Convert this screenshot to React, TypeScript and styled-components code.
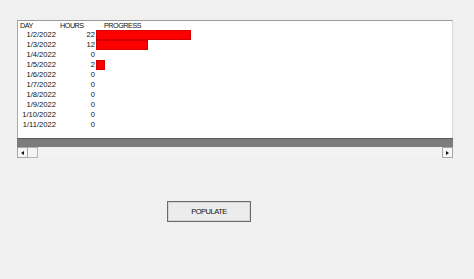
import React from "react";
import styled, { createGlobalStyle } from "styled-components";

const Global = createGlobalStyle`
  html, body { margin: 0; padding: 0; background: #f0f0f0; }
  body { font-family: "Liberation Sans", Arial, sans-serif; color: #111; }
`;

const Page = styled.div`
  width: 474px;
  height: 279px;
  box-sizing: border-box;
  padding: 20px 0 0 17px;
  display: flex;
  flex-direction: column;
`;

const ListBox = styled.div`
  width: 436px;
  display: flex;
  flex-direction: column;
`;

const Body = styled.div`
  height: 117px;
  background: #ffffff;
  border-top: 1px solid #9a9a9a;
  border-left: 1px solid #a8a8a8;
  border-right: 1px solid #d8d8d8;
  display: flex;
  flex-direction: column;
`;

const Row = styled.div<{ $h: number }>`
  display: grid;
  grid-template-columns: 38px 39px 1fr;
  height: ${(p) => p.$h}px;
  align-items: center;
  font-size: 7.6px;
  line-height: ${(p) => p.$h}px;
`;

const Head = styled.div<{ $pad: number }>`
  padding-left: ${(p) => p.$pad}px;
  font-size: 7.2px;
  letter-spacing: -0.45px;
  color: #111;
  white-space: nowrap;
`;

const Num = styled.div`
  text-align: right;
  color: #111;
  white-space: nowrap;
`;

const BarCell = styled.div`
  height: 100%;
  display: flex;
  align-items: stretch;
  padding-left: 1px;
`;

const Bar = styled.div`
  background: #ff0000;
  box-shadow: inset 0 0 0 1px #d40000;
`;

const DarkStrip = styled.div`
  height: 9px;
  background: #7c7c7c;
  border-top: 1px solid #5a5a5a;
  box-sizing: border-box;
`;

const ScrollBar = styled.div`
  height: 11px;
  display: flex;
  background: #f2f2f2;
`;

const ScrollBtn = styled.div`
  width: 11px;
  box-sizing: border-box;
  border: 1px solid #a6a6a6;
  background: #f6f6f6;
  display: flex;
  align-items: center;
  justify-content: center;
`;

const Thumb = styled.div`
  width: 10px;
  box-sizing: border-box;
  border: 1px solid #b4b4b4;
  border-left: none;
  background: #f4f4f4;
`;

const Track = styled.div`
  flex: 1;
`;

const Arrow = styled.div<{ $dir: "left" | "right" }>`
  width: 0;
  height: 0;
  border-top: 2.5px solid transparent;
  border-bottom: 2.5px solid transparent;
  ${(p) =>
    p.$dir === "left"
      ? "border-right: 3px solid #111;"
      : "border-left: 3px solid #111;"}
`;

const Button = styled.button`
  margin: 43px 0 0 150px;
  width: 84px;
  height: 21px;
  box-sizing: border-box;
  border: 1px solid #6a6a6a;
  box-shadow: inset 0 0 0 1px #d4d4d4;
  background: #ececec;
  font-family: "Liberation Sans", Arial, sans-serif;
  font-size: 7.5px;
  letter-spacing: -0.5px;
  color: #111;
  padding: 0;
  cursor: default;
`;

const data: [string, number][] = [
  ["1/2/2022", 22],
  ["1/3/2022", 12],
  ["1/4/2022", 0],
  ["1/5/2022", 2],
  ["1/6/2022", 0],
  ["1/7/2022", 0],
  ["1/8/2022", 0],
  ["1/9/2022", 0],
  ["1/10/2022", 0],
  ["1/11/2022", 0],
];

export default function App() {
  return (
    <>
      <Global />
      <Page>
        <ListBox>
          <Body>
            <Row $h={9}>
              <Head $pad={2}>DAY</Head>
              <Head $pad={4}>HOURS</Head>
              <Head $pad={9}>PROGRESS</Head>
            </Row>
            {data.map(([d, h]) => (
              <Row $h={10} key={d}>
                <Num>{d}</Num>
                <Num>{h}</Num>
                <BarCell>
                  {h > 0 && <Bar style={{ width: `${h * 4.3}px` }} />}
                </BarCell>
              </Row>
            ))}
          </Body>
          <DarkStrip />
          <ScrollBar>
            <ScrollBtn>
              <Arrow $dir="left" />
            </ScrollBtn>
            <Thumb />
            <Track />
            <ScrollBtn>
              <Arrow $dir="right" />
            </ScrollBtn>
          </ScrollBar>
        </ListBox>
        <Button>POPULATE</Button>
      </Page>
    </>
  );
}
